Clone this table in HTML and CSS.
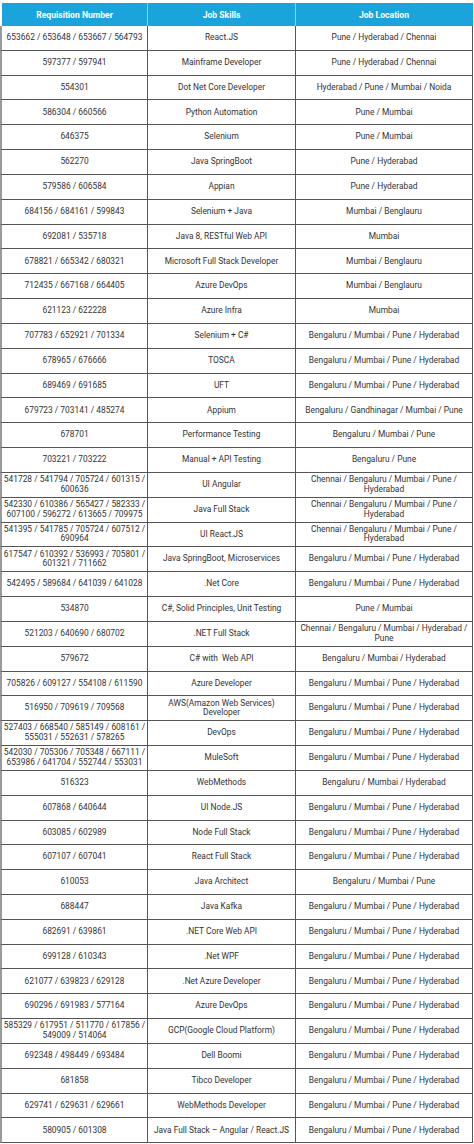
FILE: index.html
```html
<!DOCTYPE html>
<html>
<head>
<meta charset="utf-8">
<link rel="stylesheet" href="styles.css">
</head>
<body>
<div class="grid">
  <div class="hd">Requisition Number</div><div class="hd">Job Skills</div><div class="hd">Job Location</div>
  <div class="c">653662 / 653648 / 653667 / 564793</div><div class="c">React.JS</div><div class="c">Pune / Hyderabad / Chennai</div>
  <div class="c">597377 / 597941</div><div class="c">Mainframe Developer</div><div class="c">Pune / Hyderabad / Chennai</div>
  <div class="c">554301</div><div class="c">Dot Net Core Developer</div><div class="c">Hyderabad / Pune / Mumbai / Noida</div>
  <div class="c">586304 / 660566</div><div class="c">Python Automation</div><div class="c">Pune / Mumbai</div>
  <div class="c">646375</div><div class="c">Selenium</div><div class="c">Pune / Mumbai</div>
  <div class="c">562270</div><div class="c">Java SpringBoot</div><div class="c">Pune / Hyderabad</div>
  <div class="c">579586 / 606584</div><div class="c">Appian</div><div class="c">Pune / Hyderabad</div>
  <div class="c">684156 / 684161 / 599843</div><div class="c">Selenium + Java</div><div class="c">Mumbai / Benglauru</div>
  <div class="c">692081 / 535718</div><div class="c">Java 8, RESTful Web API</div><div class="c">Mumbai</div>
  <div class="c">678821 / 665342 / 680321</div><div class="c">Microsoft Full Stack Developer</div><div class="c">Mumbai / Benglauru</div>
  <div class="c">712435 / 667168 / 664405</div><div class="c">Azure DevOps</div><div class="c">Mumbai / Benglauru</div>
  <div class="c">621123 / 622228</div><div class="c">Azure Infra</div><div class="c">Mumbai</div>
  <div class="c">707783 / 652921 / 701334</div><div class="c">Selenium + C#</div><div class="c">Bengaluru / Mumbai / Pune / Hyderabad</div>
  <div class="c">678965 / 676666</div><div class="c">TOSCA</div><div class="c">Bengaluru / Mumbai / Pune / Hyderabad</div>
  <div class="c">689469 / 691685</div><div class="c">UFT</div><div class="c">Bengaluru / Mumbai / Pune / Hyderabad</div>
  <div class="c">679723 / 703141 / 485274</div><div class="c">Appium</div><div class="c">Bengaluru / Gandhinagar / Mumbai / Pune</div>
  <div class="c">678701</div><div class="c">Performance Testing</div><div class="c">Bengaluru / Mumbai / Pune</div>
  <div class="c">703221 / 703222</div><div class="c">Manual + API Testing</div><div class="c">Bengaluru / Pune</div>
  <div class="c">541728 / 541794 / 705724 / 601315 / 600636</div><div class="c">UI Angular</div><div class="c">Chennai / Bengaluru / Mumbai / Pune / Hyderabad</div>
  <div class="c">542330 / 610386 / 565427 / 582333 / 607100 / 596272 / 613665 / 709975</div><div class="c">Java Full Stack</div><div class="c">Chennai / Bengaluru / Mumbai / Pune / Hyderabad</div>
  <div class="c">541395 / 541785 / 705724 / 607512 / 690964</div><div class="c">UI React.JS</div><div class="c">Chennai / Bengaluru / Mumbai / Pune / Hyderabad</div>
  <div class="c">617547 / 610392 / 536993 / 705801 / 601321 / 711662</div><div class="c">Java SpringBoot, Microservices</div><div class="c">Bengaluru / Mumbai / Pune / Hyderabad</div>
  <div class="c">542495 / 589684 / 641039 / 641028</div><div class="c">.Net Core</div><div class="c">Bengaluru / Mumbai / Pune / Hyderabad</div>
  <div class="c">534870</div><div class="c">C#, Solid Principles, Unit Testing</div><div class="c">Pune / Mumbai</div>
  <div class="c">521203 / 640690 / 680702</div><div class="c">.NET Full Stack</div><div class="c">Chennai / Bengaluru / Mumbai / Hyderabad / Pune</div>
  <div class="c">579672</div><div class="c">C# with&nbsp; Web API</div><div class="c">Bengaluru / Mumbai / Hyderabad</div>
  <div class="c">705826 / 609127 / 554108 / 611590</div><div class="c">Azure Developer</div><div class="c">Bengaluru / Mumbai / Pune / Hyderabad</div>
  <div class="c">516950 / 709619 / 709568</div><div class="c">AWS(Amazon Web Services) Developer</div><div class="c">Bengaluru / Mumbai / Pune / Hyderabad</div>
  <div class="c">527403 / 668540 / 585149 / 608161 / 555031 / 552631 / 578265</div><div class="c">DevOps</div><div class="c">Bengaluru / Mumbai / Pune / Hyderabad</div>
  <div class="c">542030 / 705306 / 705348 / 667111 / 653986 / 641704 / 552744 / 553031</div><div class="c">MuleSoft</div><div class="c">Bengaluru / Mumbai / Pune / Hyderabad</div>
  <div class="c">516323</div><div class="c">WebMethods</div><div class="c">Bengaluru / Mumbai / Hyderabad</div>
  <div class="c">607868 / 640644</div><div class="c">UI Node.JS</div><div class="c">Bengaluru / Mumbai / Pune / Hyderabad</div>
  <div class="c">603085 / 602989</div><div class="c">Node Full Stack</div><div class="c">Bengaluru / Mumbai / Pune / Hyderabad</div>
  <div class="c">607107 / 607041</div><div class="c">React Full Stack</div><div class="c">Bengaluru / Mumbai / Pune / Hyderabad</div>
  <div class="c">610053</div><div class="c">Java Architect</div><div class="c">Bengaluru / Mumbai / Pune</div>
  <div class="c">688447</div><div class="c">Java Kafka</div><div class="c">Bengaluru / Mumbai / Pune / Hyderabad</div>
  <div class="c">682691 / 639861</div><div class="c">.NET Core Web API</div><div class="c">Bengaluru / Mumbai / Pune / Hyderabad</div>
  <div class="c">699128 / 610343</div><div class="c">.Net WPF</div><div class="c">Bengaluru / Mumbai / Pune / Hyderabad</div>
  <div class="c">621077 / 639823 / 629128</div><div class="c">.Net Azure Developer</div><div class="c">Bengaluru / Mumbai / Pune / Hyderabad</div>
  <div class="c">690296 / 691983 / 577164</div><div class="c">Azure DevOps</div><div class="c">Bengaluru / Mumbai / Pune / Hyderabad</div>
  <div class="c">585329 / 617951 / 511770 / 617856 / 549009 / 514064</div><div class="c">GCP(Google Cloud Platform)</div><div class="c">Bengaluru / Mumbai / Pune / Hyderabad</div>
  <div class="c">692348 / 498449 / 693484</div><div class="c">Dell Boomi</div><div class="c">Bengaluru / Mumbai / Pune / Hyderabad</div>
  <div class="c">681858</div><div class="c">Tibco Developer</div><div class="c">Bengaluru / Mumbai / Pune / Hyderabad</div>
  <div class="c">629741 / 629631 / 629661</div><div class="c">WebMethods Developer</div><div class="c">Bengaluru / Mumbai / Pune / Hyderabad</div>
  <div class="c">580905 / 601308</div><div class="c">Java Full Stack – Angular / React.JS</div><div class="c">Bengaluru / Mumbai / Pune / Hyderabad</div>
</div>
</body>
</html>
```

FILE: styles.css
```css
html, body {
  margin: 0;
  padding: 0;
  background: #ffffff;
}
body {
  font-family: Roboto, "Liberation Sans", sans-serif;
  color: #333333;
}
.grid {
  margin-top: 3px;
  width: 473px;
  display: grid;
  grid-template-columns: 148px 148px 177px;
  grid-template-rows: 23px;
  grid-auto-rows: 24.84px;
}
.hd {
  background: #1ba3dc;
  color: #ffffff;
  font-weight: 700;
  font-size: 8.6px;
  display: flex;
  align-items: center;
  justify-content: center;
  text-align: center;
  border-right: 1px solid #8fd0ec;
  box-sizing: border-box;
}
.hd:nth-child(3n+1) {
  margin-left: 2px;
}
.hd:nth-child(3n) {
  border-right: 1px solid #1ba3dc;
}
.c {
  font-size: 8.4px;
  line-height: 1.15;
  display: flex;
  align-items: center;
  justify-content: center;
  text-align: center;
  padding: 0 1px;
  border-right: 1px solid #555555;
  border-bottom: 1px solid #555555;
  box-sizing: border-box;
  overflow: hidden;
}
.c:nth-child(3n+1) {
  border-left: 2px solid #9a9a9a;
}
```
